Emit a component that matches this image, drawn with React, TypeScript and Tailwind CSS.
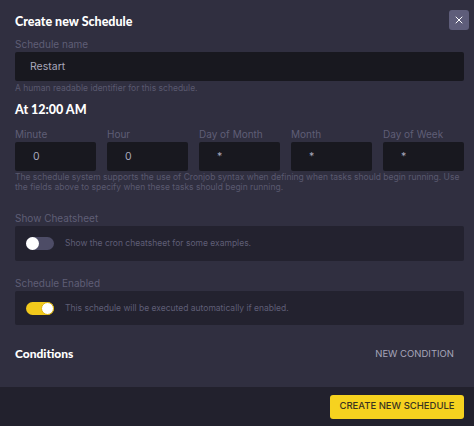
import { X } from 'lucide-react';

const CRON_FIELDS = [
  { label: 'Minute',       value: '0' },
  { label: 'Hour',         value: '0' },
  { label: 'Day of Month', value: '*' },
  { label: 'Month',        value: '*' },
  { label: 'Day of Week',  value: '*' },
];

const HEADING = { fontFamily: 'Lato, "Noto Sans", sans-serif' };

function Toggle({ on }: { on: boolean }) {
  return (
    <span
      className={[
        'relative inline-flex w-[28px] h-[13px] rounded-full shrink-0',
        on ? 'bg-[#f2c91c]' : 'bg-[#4d4c66]',
      ].join(' ')}
    >
      <span
        className={[
          'absolute top-0 w-[13px] h-[13px] rounded-full bg-white',
          on ? 'left-[15px] border border-[#d8b10f]' : 'left-0',
        ].join(' ')}
      />
    </span>
  );
}

export default function App() {
  return (
    <div
      className="w-[474px] h-[426px] bg-[#302f40] flex flex-col text-[#8d8ca3] overflow-hidden"
      style={{ fontFamily: 'Inter, "Noto Sans", sans-serif' }}
    >
      <div className="flex-1 pl-[15px] pr-[10px] pt-[14px]">
        {/* Header */}
        <div className="flex items-start justify-between">
          <h1 className="text-[12.5px] font-black text-white leading-[16px]" style={HEADING}>Create new Schedule</h1>
          <button
            type="button"
            className="w-[20px] h-[20px] -mr-[5px] -mt-[4px] rounded-[3px] bg-[#5e5d7a] flex items-center justify-center text-white"
          >
            <X size={12} strokeWidth={2} />
          </button>
        </div>

        {/* Name */}
        <p className="mt-[7px] text-[10px] text-[#5f5e76] leading-[14px]">Schedule name</p>
        <div className="mt-[1px] h-[29px] bg-[#18181f] rounded-[2px] flex items-center px-[15px] text-[10.5px] text-[#a8a7bb]">
          Restart
        </div>
        <p className="mt-[1px] text-[8.5px] text-[#5a596f] leading-[12px]">A human readable identifier for this schedule.</p>

        <h2 className="mt-[8px] text-[12.5px] font-black text-white leading-[16px]" style={HEADING}>At 12:00 AM</h2>

        {/* Cron fields */}
        <div className="mt-[9px] grid grid-cols-5 gap-[11px]">
          {CRON_FIELDS.map(({ label, value }) => (
            <div key={label}>
              <p className="text-[10px] text-[#5f5e76] leading-[14px]">{label}</p>
              <div className="mt-[1px] h-[29px] bg-[#18181f] rounded-[2px] flex items-center px-[18px] text-[10.5px] text-[#a8a7bb]">
                {value}
              </div>
            </div>
          ))}
        </div>
        <p className="mt-[1px] text-[8.5px] text-[#5a596f] leading-[10px]">
          The schedule system supports the use of Cronjob syntax when defining when tasks should begin running. Use
          the fields above to specify when these tasks should begin running.
        </p>

        {/* Cheatsheet */}
        <p className="mt-[19px] text-[10px] text-[#5f5e76] leading-[14px]">Show Cheatsheet</p>
        <div className="mt-[1px] h-[35px] bg-[#23222f] rounded-[2px] flex items-center gap-[11px] px-[11px]">
          <Toggle on={false} />
          <span className="text-[8.5px] text-[#5f5e76]">Show the cron cheatsheet for some examples.</span>
        </div>

        {/* Enabled */}
        <p className="mt-[15px] text-[10px] text-[#5f5e76] leading-[14px]">Schedule Enabled</p>
        <div className="mt-[1px] h-[34px] bg-[#23222f] rounded-[2px] flex items-center gap-[11px] px-[11px]">
          <Toggle on />
          <span className="text-[8.5px] text-[#5f5e76]">This schedule will be executed automatically if enabled.</span>
        </div>

        {/* Conditions */}
        <div className="mt-[21px] flex items-center justify-between">
          <h3 className="text-[12px] font-black text-white leading-[16px]" style={HEADING}>Conditions</h3>
          <button type="button" className="mr-[10px] text-[9.5px] text-[#a6a5b9] leading-[16px]">NEW CONDITION</button>
        </div>
      </div>

      {/* Footer */}
      <div className="h-[39px] bg-[#22212d] flex items-center justify-end px-[10px]">
        <button
          type="button"
          className="h-[24px] w-[134px] rounded-[3px] bg-[#f6d21f] text-[9.5px] font-medium text-[#3a3420]"
        >
          CREATE NEW SCHEDULE
        </button>
      </div>
    </div>
  );
}
